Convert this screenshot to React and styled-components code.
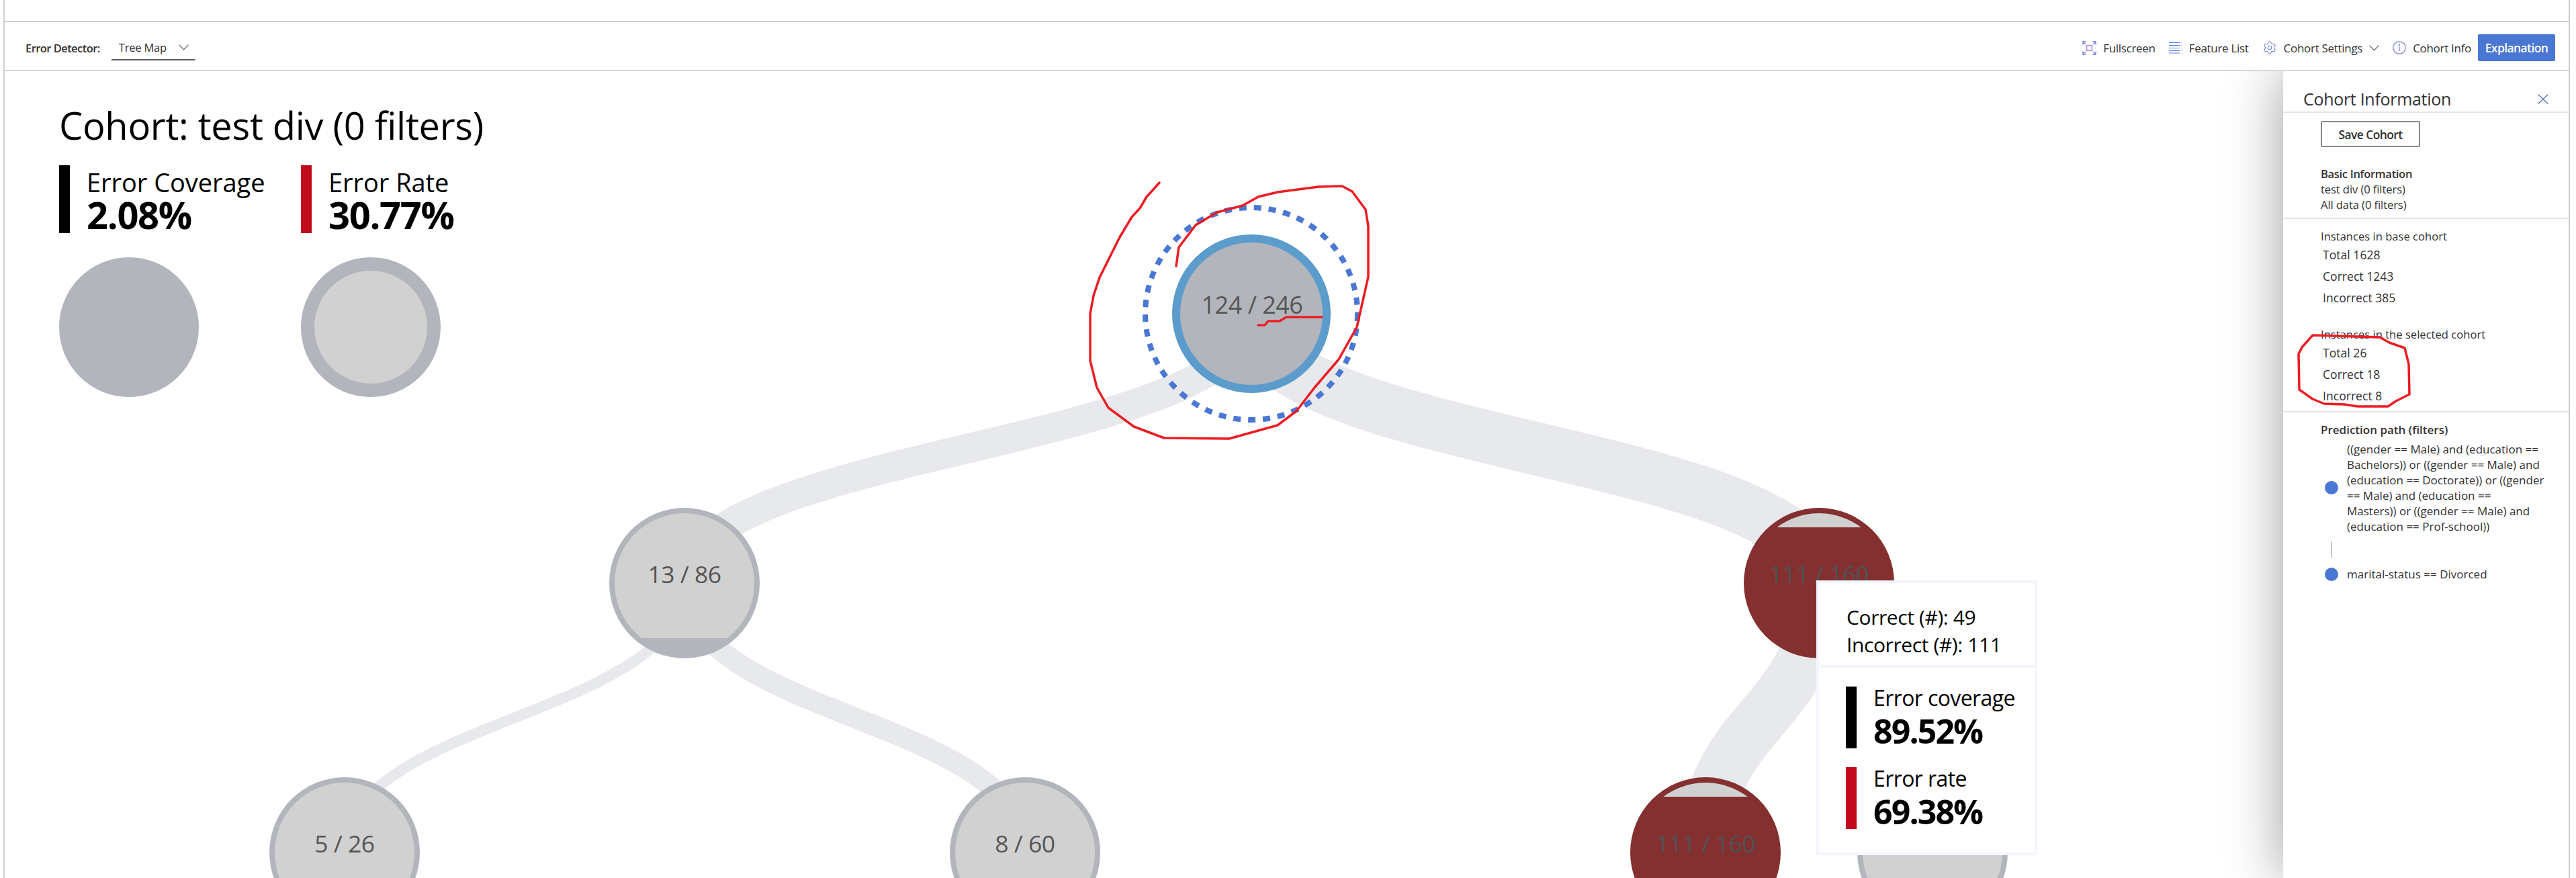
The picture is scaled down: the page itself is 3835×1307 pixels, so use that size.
import React from 'react'
import styled, { createGlobalStyle } from 'styled-components'
import { Settings } from 'lucide-react'

const GlobalStyle = createGlobalStyle`
  html, body {
    margin: 0;
    padding: 0;
    background: #fff;
    overflow: hidden;
  }
  * { box-sizing: border-box; }
`

const FONT = `'Open Sans', 'Noto Sans', 'Liberation Sans', sans-serif`

const Page = styled.div`
  position: relative;
  width: 3835px;
  height: 1307px;
  background: #fff;
  font-family: ${FONT};
  overflow: hidden;
`

const Frame = styled.div`
  width: 3821px;
  height: 1307px;
  margin-left: 5px;
  border-left: 2px solid #cfcfcf;
  border-right: 2px solid #cfcfcf;
  display: flex;
  flex-direction: column;
`

const TopStrip = styled.div`
  height: 33px;
  flex: none;
  border-bottom: 2px solid #cfcfcf;
`

const Toolbar = styled.div`
  height: 73px;
  flex: none;
  position: relative;
  z-index: 3;
  background: #fff;
  border-bottom: 2px solid #d6d6d6;
  display: flex;
  align-items: center;
  justify-content: space-between;
  padding: 0 20px 0 31px;
`

const ToolbarLeft = styled.div`
  display: flex;
  align-items: center;
  gap: 17px;
`

const DetectorLabel = styled.span`
  font-size: 16.5px;
  font-weight: 600;
  letter-spacing: -0.55px;
  color: #323130;
  margin-top: 6px;
`

const Dropdown = styled.div`
  width: 124px;
  height: 35px;
  padding: 0 9px 2px 11px;
  border-bottom: 2px solid #605e5c;
  display: flex;
  align-items: center;
  justify-content: space-between;
  font-size: 16.5px;
  letter-spacing: -0.2px;
  color: #323130;
  margin-top: 7px;
`

const ToolbarRight = styled.div`
  display: flex;
  align-items: center;
  margin-top: 5px;
`

const ToolItem = styled.div`
  display: flex;
  align-items: center;
  gap: 10px;
  margin-right: ${({ $gap }) => $gap}px;
  font-size: 17px;
  letter-spacing: -0.3px;
  color: #323130;
  svg { flex: none; }
`

const ExplainButton = styled.button`
  width: 115px;
  height: 40px;
  border: none;
  border-radius: 2px;
  background: #4a77d4;
  color: #fff;
  font-family: ${FONT};
  font-size: 17.5px;
  font-weight: 600;
  letter-spacing: -0.6px;
  padding: 0;
`

const Body = styled.div`
  flex: 1;
  min-height: 0;
  display: flex;
  position: relative;
  overflow: hidden;
`

const Canvas = styled.div`
  flex: 1;
  min-width: 0;
  position: relative;
  padding: 45px 0 0 81px;
`

const TreeSvg = styled.svg`
  position: absolute;
  left: -7px;
  top: -106px;
  width: 3835px;
  height: 1307px;
`

const Heading = styled.h1`
  position: relative;
  margin: 0;
  height: 95px;
  font-size: 56px;
  line-height: 70px;
  font-weight: 400;
  letter-spacing: -0.3px;
  color: #000;
`

const Legend = styled.div`
  position: relative;
  display: flex;
  gap: 152px;
`

const LegendColumn = styled.div`
  width: 208px;
  display: flex;
  flex-direction: column;
  gap: 36px;
`

const MetricRow = styled.div`
  display: flex;
  gap: ${({ $gap }) => $gap}px;
  height: ${({ $height }) => $height}px;
`

const MetricBar = styled.div`
  width: 16px;
  flex: none;
  background: ${({ $color }) => $color};
`

const MetricText = styled.div`
  display: flex;
  flex-direction: column;
  white-space: nowrap;
  color: #000;
`

const MetricLabel = styled.span`
  font-size: ${({ $small }) => ($small ? 32 : 38)}px;
  line-height: ${({ $small }) => ($small ? 40 : 44)}px;
  letter-spacing: ${({ $small }) => ($small ? -0.6 : -0.05)}px;
  margin-top: ${({ $small }) => ($small ? -3 : 3)}px;
`

const MetricValue = styled.span`
  font-size: ${({ $small }) => ($small ? 50 : 56)}px;
  line-height: ${({ $small }) => ($small ? 58 : 52)}px;
  font-weight: 700;
  letter-spacing: ${({ $small }) => ($small ? -1.9 : -1.3)}px;
`

const LegendCircle = styled.div`
  width: 208px;
  height: 208px;
  border-radius: 50%;
  background: ${({ $fill }) => $fill};
  border: 20px solid #b3b5bc;
`

const Tooltip = styled.div`
  position: absolute;
  left: 2697px;
  top: 758px;
  width: 329px;
  height: 409px;
  background: #fff;
  border: 4px solid #f3f6fc;
  z-index: 2;
  display: flex;
  flex-direction: column;
`

const TipHead = styled.div`
  height: 122px;
  flex: none;
  padding: 30px 0 0 41px;
  font-size: 30px;
  line-height: 41px;
  letter-spacing: -0.4px;
  color: #000;
`

const TipBody = styled.div`
  flex: 1;
  padding: 28px 0 0 37px;
  display: flex;
  flex-direction: column;
  gap: 28px;
  border-top: 4px solid #f3f6fc;
  margin-left: 3px;
`

const Panel = styled.aside`
  width: 425px;
  flex: none;
  position: relative;
  z-index: 1;
  background: #fff;
  box-shadow: 0 0 78px rgba(0, 0, 0, 0.38);
  color: #323130;
  font-size: 16.6px;
`

const PanelHeader = styled.div`
  height: 62px;
  padding: 22px 30px 0 30px;
  border-bottom: 2px solid #e4e4e4;
  display: flex;
  align-items: center;
  justify-content: space-between;
`

const PanelTitle = styled.div`
  font-size: 25px;
  font-weight: 500;
  letter-spacing: -0.3px;
  color: #323130;
`

const SaveButton = styled.button`
  display: block;
  width: 148px;
  height: 39px;
  margin: 12px 0 0 56px;
  background: #fff;
  border: 2px solid #8a8886;
  border-radius: 2px;
  font-family: ${FONT};
  font-size: 17.5px;
  font-weight: 600;
  letter-spacing: -0.6px;
  color: #323130;
  padding: 0;
`

const Section = styled.div`
  padding: ${({ $pad }) => $pad};
  border-bottom: ${({ $line }) => ($line ? '2px solid #e4e4e4' : 'none')};
  height: ${({ $height }) => ($height ? `${$height}px` : 'auto')};
`

const SectionTitle = styled.div`
  font-weight: 600;
  font-size: ${({ $tight }) => ($tight ? 16.6 : 17)}px;
  line-height: 23px;
  letter-spacing: ${({ $tight }) => ($tight ? '-0.35px' : '0')};
`

const InfoLine = styled.div`
  line-height: 23px;
  letter-spacing: -0.1px;
`

const StatGroup = styled.div`
  margin-bottom: ${({ $after }) => $after}px;
`

const StatCaption = styled.div`
  line-height: 23px;
`

const StatRow = styled.div`
  line-height: 32px;
  padding-left: 3px;
  font-size: 17.6px;
`

const PathItem = styled.div`
  display: flex;
  align-items: center;
  gap: 13px;
  padding-left: 6px;
  margin-top: ${({ $top }) => $top}px;
`

const PathDot = styled.span`
  width: 20px;
  height: 20px;
  flex: none;
  border-radius: 50%;
  background: #4a77d4;
`

const PathText = styled.div`
  line-height: 23px;
  font-size: 17px;
  white-space: nowrap;
`

const PathConnector = styled.div`
  width: 2px;
  height: 25px;
  margin: 11px 0 0 15px;
  background: #c8c8c8;
`

const AnnotationLayer = styled.svg`
  position: absolute;
  left: 0;
  top: 0;
  z-index: 5;
  pointer-events: none;
`

const MetricBlock = ({ color, label, value, small }) => (
  <MetricRow $gap={25} $height={small ? 92 : 101}>
    <MetricBar $color={color} />
    <MetricText>
      <MetricLabel $small={small}>{label}</MetricLabel>
      <MetricValue $small={small}>{value}</MetricValue>
    </MetricText>
  </MetricRow>
)

const Chevron = ({ width = 15, height = 9, color = '#605e5c' }) => (
  <svg width={width} height={height} viewBox="0 0 15 9" fill="none">
    <path d="M0.5 0.7 L7.5 8 L14.5 0.7" stroke={color} strokeWidth="1.2" />
  </svg>
)

const FullscreenIcon = () => (
  <svg width="21" height="21" viewBox="0 0 21 21" fill="none" stroke="#6f80d8" strokeWidth="1.3">
    <rect x="6.6" y="6.6" width="7.8" height="7.8" stroke="#a58fdc" strokeWidth="1.6" />
    <path d="M1 5.5 V1 H5.5 M1 1 L5 5" />
    <path d="M20 5.5 V1 H15.5 M20 1 L16 5" />
    <path d="M1 15.5 V20 H5.5 M1 20 L5 16" />
    <path d="M20 15.5 V20 H15.5 M20 20 L16 16" />
  </svg>
)

const ListIcon = () => (
  <svg width="20" height="18" viewBox="0 0 20 18" fill="none" stroke="#5578d8" strokeWidth="1.2">
    <path d="M0 1.5 H16 M0 5.5 H16 M0 9.5 H16 M0 13.5 H16 M0 17 H16" />
    <path d="M18 1.5 H20 M18 5.5 H20 M18 9.5 H20 M18 13.5 H20" stroke="#aabcf0" />
  </svg>
)

const InfoIcon = () => (
  <svg width="20" height="20" viewBox="0 0 20 20" fill="none" stroke="#6f80d8" strokeWidth="1.2">
    <circle cx="10" cy="10" r="9.2" />
    <path d="M10 8.6 V15" />
    <circle cx="10" cy="5.8" r="0.6" fill="#6f80d8" />
  </svg>
)

// chart data, page coordinates
const LINKS = [
  { from: [1863, 467], to: [1019, 868], width: 44 },
  { from: [1863, 467], to: [2708, 868], width: 79 },
  { from: [1019, 868], to: [513, 1269], width: 16 },
  { from: [1019, 868], to: [1526, 1269], width: 31 },
  { from: [2708, 868], to: [2539, 1269], width: 79 },
  { from: [2708, 868], to: [2877, 1269], width: 12 },
]

const linkPath = ({ from, to }) => {
  const mid = (from[1] + to[1]) / 2
  return `M${from[0]} ${from[1]} C${from[0]} ${mid}, ${to[0]} ${mid}, ${to[0]} ${to[1]}`
}

const GREY = '#b3b5bc'
const LIGHT = '#d1d1d1'
const DARK_RED = '#843030'

// level: y where the error colour starts, the light fill stops there
const NODES = [
  { x: 1019, y: 868, ring: GREY, level: 950, label: '13 / 86', color: '#555' },
  { x: 513, y: 1269, ring: GREY, label: '5 / 26', color: '#555' },
  { x: 1526, y: 1269, ring: GREY, label: '8 / 60', color: '#555' },
  { x: 2708, y: 868, ring: DARK_RED, level: 785, label: '111 / 160', color: '#4f5254' },
  { x: 2539, y: 1269, ring: DARK_RED, level: 1186, label: '111 / 160', color: '#4f5254' },
  { x: 2877, y: 1269, ring: GREY, label: '', color: '#555' },
]

const TreeNode = ({ x, y, ring, level, label, color, index }) => {
  const r = 112
  const stop = level ?? y + r
  return (
    <g>
      <clipPath id={`node-${index}`}>
        <circle cx={x} cy={y} r={r - 8} />
      </clipPath>
      <circle cx={x} cy={y} r={r} fill={ring} />
      <rect x={x - r} y={y - r} width={r * 2} height={stop - (y - r)} fill={LIGHT} clipPath={`url(#node-${index})`} />
      <text x={x} y={y} textAnchor="middle" fontSize="35.5" letterSpacing="-0.5" fill={color}>
        {label}
      </text>
    </g>
  )
}

const RED_MARKS = [
  // around the root node
  [[1726, 272], [1717, 282], [1707, 293], [1697, 310], [1685, 323], [1667, 353], [1652, 383], [1637, 413], [1628, 440], [1623, 467], [1623, 537], [1633, 577], [1650, 607], [1688, 635], [1733, 652], [1830, 653], [1902, 633], [1930, 612], [1957, 577], [1993, 535], [2020, 487], [2037, 412], [2037, 337], [2033, 312], [2013, 285], [1998, 277], [1963, 278], [1902, 286], [1873, 293], [1850, 306], [1812, 316], [1780, 335], [1755, 368], [1751, 396]],
  // squiggle under the label
  [[1873, 484], [1883, 484], [1888, 478], [1905, 478], [1915, 472], [1968, 472]],
  // around the selected cohort counts
  [[3443, 499], [3543, 502], [3557, 510], [3580, 518], [3586, 542], [3587, 587], [3567, 597], [3555, 605], [3510, 605], [3490, 602], [3460, 601], [3443, 594], [3423, 580], [3422, 527], [3427, 517], [3443, 499]],
]

const toPoints = (pts) => pts.map((p) => p.join(',')).join(' ')

const PATH_LINES = [
  '((gender == Male) and (education ==',
  'Bachelors)) or ((gender == Male) and',
  '(education == Doctorate)) or ((gender',
  '== Male) and (education ==',
  'Masters)) or ((gender == Male) and',
  '(education == Prof-school))',
]

export default function App() {
  return (
    <Page>
      <GlobalStyle />
      <Frame>
        <TopStrip />
        <Toolbar>
          <ToolbarLeft>
            <DetectorLabel>Error Detector:</DetectorLabel>
            <Dropdown>
              Tree Map
              <Chevron />
            </Dropdown>
          </ToolbarLeft>
          <ToolbarRight>
            <ToolItem $gap={20}><FullscreenIcon />Fullscreen</ToolItem>
            <ToolItem $gap={20}><ListIcon />Feature List</ToolItem>
            <ToolItem $gap={20}>
              <Settings size={22} strokeWidth={1.1} color="#6f80d8" />
              Cohort Settings
              <Chevron />
            </ToolItem>
            <ToolItem $gap={10}><InfoIcon />Cohort Info</ToolItem>
            <ExplainButton>Explanation</ExplainButton>
          </ToolbarRight>
        </Toolbar>
        <Body>
          <Canvas>
            <TreeSvg viewBox="0 0 3835 1307">
              {LINKS.map((l, i) => (
                <path key={i} d={linkPath(l)} fill="none" stroke="#e8e9ed" strokeWidth={l.width} />
              ))}
              <circle cx="1863" cy="467" r="158" fill="none" stroke="#4a77d4" strokeWidth="8" strokeDasharray="11 11" />
              <circle cx="1863" cy="467" r="112" fill={GREY} stroke="#5c9ccc" strokeWidth="12" />
              <text x="1864" y="467" textAnchor="middle" fontSize="36" letterSpacing="-0.5" fill="#555">124 / 246</text>
              {NODES.map((n, i) => (
                <TreeNode key={i} index={i} {...n} />
              ))}
            </TreeSvg>
            <Heading>Cohort: test div (0 filters)</Heading>
            <Legend>
              <LegendColumn>
                <MetricBlock color="#000" label="Error Coverage" value="2.08%" />
                <LegendCircle $fill={GREY} />
              </LegendColumn>
              <LegendColumn>
                <MetricBlock color="#c30a1d" label="Error Rate" value="30.77%" />
                <LegendCircle $fill={LIGHT} />
              </LegendColumn>
            </Legend>
            <Tooltip>
              <TipHead>
                Correct (#): 49
                <br />
                Incorrect (#): 111
              </TipHead>
              <TipBody>
                <MetricBlock small color="#000" label="Error coverage" value="89.52%" />
                <MetricBlock small color="#c30a1d" label="Error rate" value="69.38%" />
              </TipBody>
            </Tooltip>
          </Canvas>
          <Panel>
            <PanelHeader>
              <PanelTitle>Cohort Information</PanelTitle>
              <svg width="16" height="15" viewBox="0 0 16 15" fill="none" stroke="#4a6fc0" strokeWidth="1.2">
                <path d="M0.5 0.5 L15.5 14.5 M15.5 0.5 L0.5 14.5" />
              </svg>
            </PanelHeader>
            <SaveButton>Save Cohort</SaveButton>
            <Section $pad="28px 0 0 56px" $line $height={107}>
              <SectionTitle $tight>Basic Information</SectionTitle>
              <InfoLine>test div (0 filters)</InfoLine>
              <InfoLine>All data (0 filters)</InfoLine>
            </Section>
            <Section $pad="14px 0 0 56px" $line $height={288}>
              <StatGroup $after={27}>
                <StatCaption>Instances in base cohort</StatCaption>
                <StatRow>Total 1628</StatRow>
                <StatRow>Correct 1243</StatRow>
                <StatRow>Incorrect 385</StatRow>
              </StatGroup>
              <StatGroup $after={0}>
                <StatCaption>Instances in the selected cohort</StatCaption>
                <StatRow>Total 26</StatRow>
                <StatRow>Correct 18</StatRow>
                <StatRow>Incorrect 8</StatRow>
              </StatGroup>
            </Section>
            <Section $pad="14px 0 0 56px">
              <SectionTitle>Prediction path (filters)</SectionTitle>
              <PathItem $top={6}>
                <PathDot />
                <PathText>
                  {PATH_LINES.map((line) => (
                    <div key={line}>{line}</div>
                  ))}
                </PathText>
              </PathItem>
              <PathConnector />
              <PathItem $top={12}>
                <PathDot />
                <PathText>marital-status == Divorced</PathText>
              </PathItem>
            </Section>
          </Panel>
        </Body>
      </Frame>
      <AnnotationLayer width="3835" height="1307" viewBox="0 0 3835 1307" fill="none" stroke="#ed1c24" strokeWidth="3.5" strokeLinejoin="round" strokeLinecap="round">
        {RED_MARKS.map((m, i) => (
          <polyline key={i} points={toPoints(m)} />
        ))}
      </AnnotationLayer>
    </Page>
  )
}
